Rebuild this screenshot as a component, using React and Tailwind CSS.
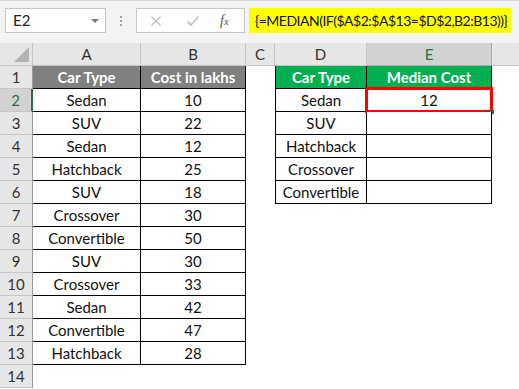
import React from "react"

const font = { fontFamily: "Lato, 'Liberation Sans', sans-serif" }

const carData = [
  ["Sedan", "10"],
  ["SUV", "22"],
  ["Sedan", "12"],
  ["Hatchback", "25"],
  ["SUV", "18"],
  ["Crossover", "30"],
  ["Convertible", "50"],
  ["SUV", "30"],
  ["Crossover", "33"],
  ["Sedan", "42"],
  ["Convertible", "47"],
  ["Hatchback", "28"],
]

const lookup = ["Sedan", "SUV", "Hatchback", "Crossover", "Convertible"]

const cols = ["A", "B", "C", "D", "E"]

const Toolbar = () => (
  <div className="h-[43px] bg-[#f3f3f3] border-t border-[#dadada] flex items-start pt-[7px]">
    {/* name box */}
    <div className="ml-[5px] w-[101px] h-[25px] bg-white border border-[#c6c6c6] flex items-center justify-between pl-[7px] pr-[6px]">
      <span className="text-[15px] text-[#222]">E2</span>
      <span className="w-0 h-0 border-l-[4px] border-r-[4px] border-t-[4px] border-l-transparent border-r-transparent border-t-[#7a7a7a]" />
    </div>
    {/* grip dots */}
    <div className="ml-[14px] w-[3px] h-[25px] flex flex-col justify-center gap-[2px]">
      <span className="w-[2px] h-[2px] bg-[#a6a6a6]" />
      <span className="w-[2px] h-[2px] bg-[#a6a6a6]" />
      <span className="w-[2px] h-[2px] bg-[#a6a6a6]" />
    </div>
    {/* cancel / enter / fx */}
    <div className="ml-[13px] w-[109px] h-[25px] bg-white border border-[#c6c6c6] flex items-center">
      <svg className="ml-[13px]" width="12" height="12" viewBox="0 0 12 12">
        <path d="M1.5 1.5 L10.5 10.5 M10.5 1.5 L1.5 10.5" stroke="#c2c2c2" strokeWidth="1.4" />
      </svg>
      <svg className="ml-[24px]" width="14" height="12" viewBox="0 0 14 12">
        <path d="M1.5 6.5 L5 10 L12.5 1.5" stroke="#c2c2c2" strokeWidth="1.8" fill="none" />
      </svg>
      <span
        className="ml-[20px] text-[14px] italic text-[#555] leading-none"
        style={{ fontFamily: "'Liberation Serif', serif" }}
      >
        f<span className="text-[11px]">x</span>
      </span>
    </div>
    {/* formula */}
    <div className="ml-[4px] w-[262px] h-[25px] bg-[#ffff00] flex items-center pl-[6px]">
      <span className="text-[14px] text-[#111] whitespace-nowrap tracking-[-0.5px]">
        {"{=MEDIAN(IF($A$2:$A$13=$D$2,B2:B13))}"}
      </span>
    </div>
  </div>
)

const ColHeader = ({ label, selected }) => (
  <div
    className={
      selected
        ? "bg-[#d2d2d2] text-[#217346] border-r border-b border-[#ababab] flex items-center justify-center text-[15px]"
        : "bg-[#e6e6e6] text-[#333] border-r border-b border-[#c6c6c6] flex items-center justify-center text-[15px]"
    }
  >
    {label}
  </div>
)

const RowHeader = ({ n }) => (
  <div
    className={
      n === 2
        ? "bg-[#d2d2d2] text-[#217346] border-b border-[#c6c6c6] border-r-2 border-r-[#217346] flex items-center justify-center text-[15px]"
        : "bg-[#e6e6e6] text-[#333] border-b border-[#c6c6c6] border-r border-r-[#9a9a9a] flex items-center justify-center text-[15px]"
    }
  >
    {n}
  </div>
)

const App = () => {
  const rows = []
  for (let r = 1; r <= 14; r++) {
    const d = r >= 2 && r <= 13 ? carData[r - 2] : null
    const lk = r >= 2 && r <= 6 ? lookup[r - 2] : null

    rows.push(<RowHeader key={"h" + r} n={r} />)

    // A and B
    if (r === 1) {
      rows.push(
        <div key={"a" + r} className="bg-[#808080] text-white font-bold border-r border-b border-black flex items-center justify-center text-[15px]">
          Car Type
        </div>
      )
      rows.push(
        <div key={"b" + r} className="bg-[#808080] text-white font-bold border-r border-b border-black flex items-center justify-center text-[15px]">
          Cost in lakhs
        </div>
      )
    } else if (d) {
      rows.push(
        <div key={"a" + r} className="bg-white text-[#111] border-r border-b border-black flex items-center justify-center text-[15px]">
          {d[0]}
        </div>
      )
      rows.push(
        <div key={"b" + r} className="bg-white text-[#111] border-r border-b border-black flex items-center justify-center text-[15px]">
          {d[1]}
        </div>
      )
    } else {
      rows.push(<div key={"a" + r} className="bg-white" />)
      rows.push(<div key={"b" + r} className="bg-white" />)
    }

    // C
    rows.push(<div key={"c" + r} className="bg-white" />)

    // D and E
    if (r === 1) {
      rows.push(
        <div key={"d" + r} className="bg-[#00b050] text-white font-bold border-l border-r border-b border-black flex items-center justify-center text-[15px]">
          Car Type
        </div>
      )
      rows.push(
        <div key={"e" + r} className="bg-[#00b050] text-white font-bold border-r border-b border-black flex items-center justify-center text-[15px]">
          Median Cost
        </div>
      )
    } else if (lk) {
      rows.push(
        <div key={"d" + r} className="bg-white text-[#111] border-l border-r border-b border-black flex items-center justify-center text-[15px]">
          {lk}
        </div>
      )
      rows.push(
        <div key={"e" + r} className="relative bg-white text-[#111] border-r border-b border-black flex items-center justify-center text-[15px]">
          {r === 2 && "12"}
          {r === 2 && (
            <>
              <div className="absolute -left-[2px] -top-[2px] -right-[2px] -bottom-[2px] border-[3px] border-[#ff0000]" />
              <div className="absolute -right-[3px] -bottom-[3px] w-[4px] h-[4px] bg-[#217346]" />
            </>
          )}
        </div>
      )
    } else {
      rows.push(<div key={"d" + r} className="bg-white" />)
      rows.push(<div key={"e" + r} className="bg-white" />)
    }

    rows.push(<div key={"f" + r} className="bg-white" />)
  }

  return (
    <div className="w-[519px] h-[389px] overflow-hidden bg-white" style={font}>
      <Toolbar />
      <div className="grid grid-cols-[33px_108px_105px_29px_92px_125px_1fr] auto-rows-[23px]">
        {/* corner */}
        <div className="bg-[#e6e6e6] border-r border-b border-[#c6c6c6] flex items-end justify-end pr-[3px] pb-[3px]">
          <svg width="15" height="15" viewBox="0 0 15 15">
            <path d="M15 0 L15 15 L0 15 Z" fill="#b4b4b4" />
          </svg>
        </div>
        {cols.map((c) => (
          <ColHeader key={c} label={c} selected={c === "E"} />
        ))}
        <div className="bg-[#e6e6e6] border-b border-[#c6c6c6]" />
        {rows}
      </div>
    </div>
  )
}

export default App
